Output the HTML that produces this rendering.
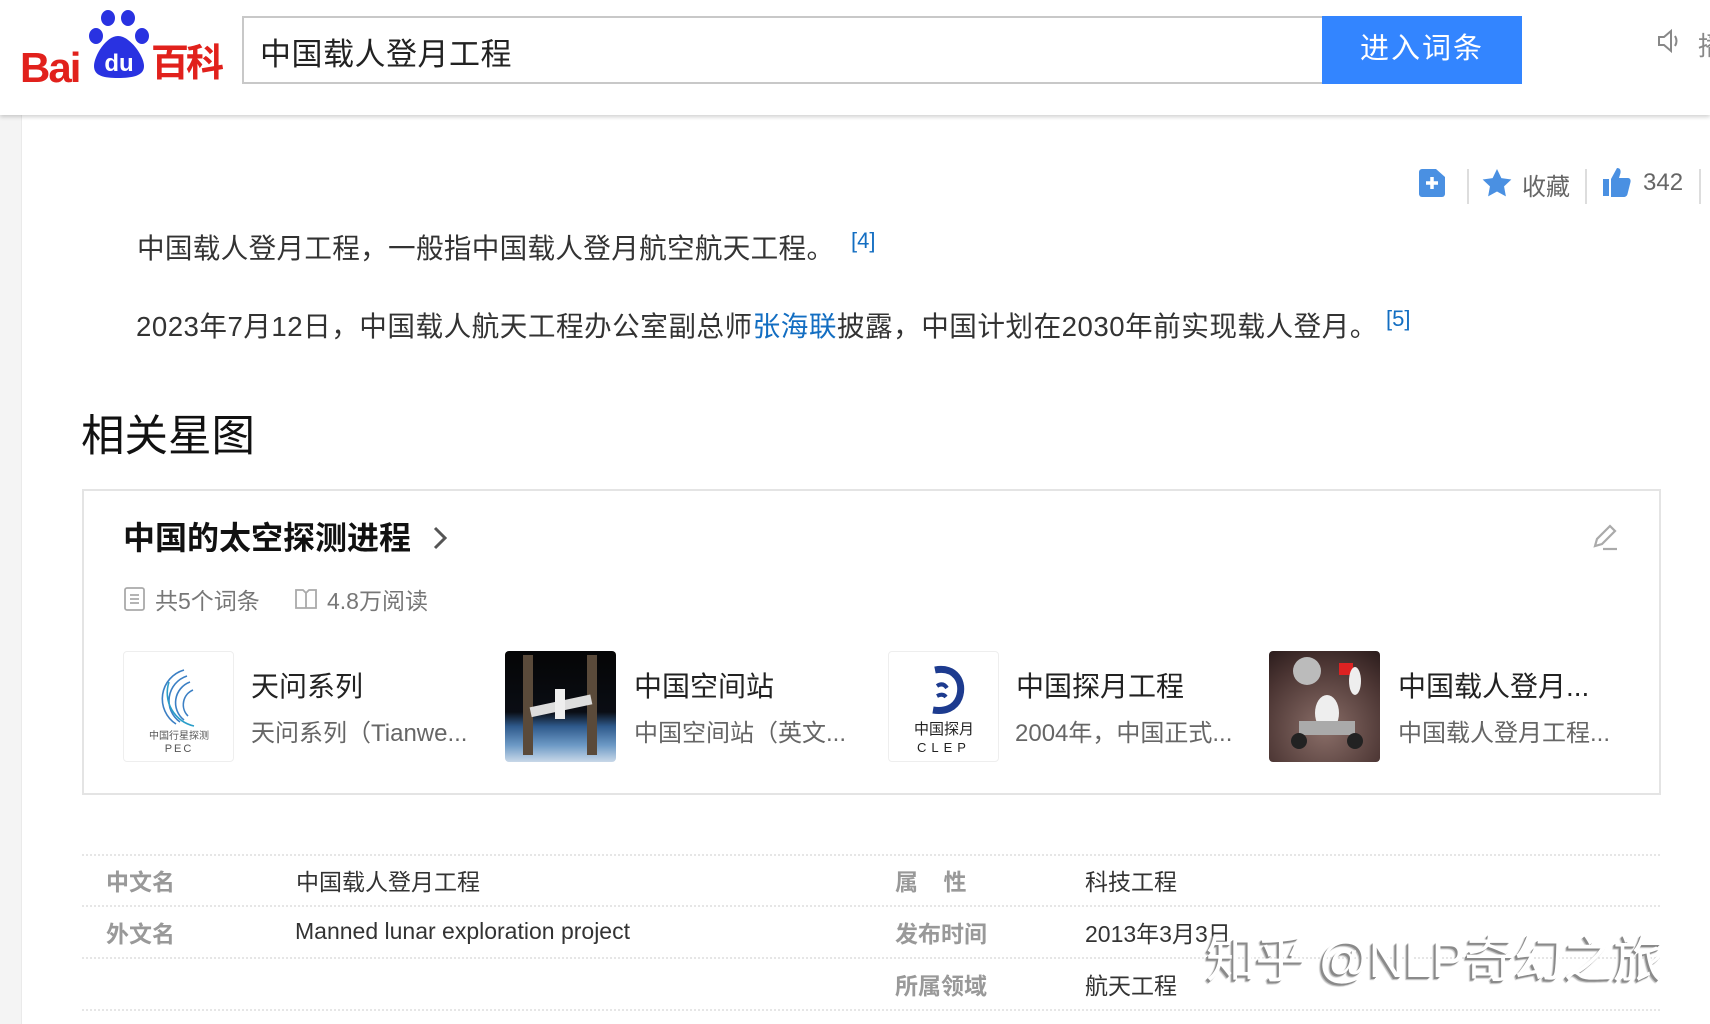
<!DOCTYPE html>
<html><head><meta charset="utf-8"><style>
*{margin:0;padding:0;box-sizing:border-box}
body{width:1710px;height:1024px;overflow:hidden;background:#fff;font-family:"Liberation Sans","Noto Sans CJK SC",sans-serif;color:#222;position:relative}
.a{position:absolute;white-space:nowrap}
.hdr{position:absolute;left:0;top:0;width:1710px;height:115px;background:#fff;box-shadow:0 2px 4px rgba(0,0,0,.18);z-index:2}
.strip{position:absolute;left:0;top:115px;width:22px;height:909px;background:#f4f4f4;border-right:1px solid #eaeaea}
.p{font-size:27.6px;line-height:32px;color:#333}
.sup{font-size:22px;color:#136ec2}
.tt{font-size:28px;color:#222}
.st{font-size:24px;color:#666}
.thumb{position:absolute;width:111px;height:111px;border-radius:4px;overflow:hidden}
.lab{font-size:23px;color:#999;font-weight:bold}
.val{font-size:23px;color:#333}
.dl{position:absolute;left:82px;width:1578px;height:0;border-top:2px dotted #e6e6e6}
</style></head><body>
<div class="hdr">
 <div class="a" style="left:20px;top:44px;font-size:42px;font-weight:bold;color:#e1211c;letter-spacing:-2px;font-family:'Liberation Sans',sans-serif">Bai</div>
 <svg class="a" style="left:88px;top:8px" width="66" height="72" viewBox="0 0 66 72">
  <ellipse cx="20" cy="10" rx="7" ry="8" fill="#2932e1"/><ellipse cx="40" cy="10" rx="7" ry="8" fill="#2932e1"/>
  <ellipse cx="8" cy="28" rx="7" ry="8" fill="#2932e1"/><ellipse cx="54" cy="28" rx="7" ry="8" fill="#2932e1"/>
  <path d="M30 28 C18 28 6 48 6 58 C6 68 16 70 30 70 C44 70 56 68 56 58 C56 48 42 28 30 28Z" fill="#2932e1"/>
  <text x="31" y="63" font-size="24" font-weight="bold" fill="#fff" text-anchor="middle" font-family="Liberation Sans">du</text>
 </svg>
 <div class="a" style="left:151px;top:32px;font-size:38px;font-weight:bold;color:#e1211c;letter-spacing:-3px">百科</div>
 <div class="a" style="left:242px;top:16px;width:1082px;height:68px;border:2px solid #c8c8c8;border-right:none"></div>
 <div class="a" style="left:260px;top:29px;font-size:31px;color:#222;letter-spacing:.5px">中国载人登月工程</div>
 <div class="a" style="left:1322px;top:16px;width:200px;height:68px;background:#3385ff;color:#fff;font-size:29px;text-align:center;line-height:66px;letter-spacing:2px">进入词条</div>
 <svg class="a" style="left:1656px;top:28px" width="28" height="26" viewBox="0 0 28 26"><path d="M3 9h5l7-6v20l-7-6H3z" fill="none" stroke="#888" stroke-width="2"/><path d="M19 8q3 5 0 10" fill="none" stroke="#888" stroke-width="2"/></svg>
 <div class="a" style="left:1698px;top:26px;font-size:26px;color:#888">播</div>
</div>
<div class="strip"></div>

<svg class="a" style="left:1419px;top:169px" width="26" height="28" viewBox="0 0 26 28"><path d="M3 0h14l9 8v17a3 3 0 0 1-3 3H3a3 3 0 0 1-3-3V3a3 3 0 0 1 3-3z" fill="#4a90e2"/><path d="M13 8v12M7 14h12" stroke="#fff" stroke-width="3.5"/></svg>
<div class="a" style="left:1467px;top:169px;width:2px;height:35px;background:#ddd"></div>
<svg class="a" style="left:1482px;top:169px" width="30" height="28" viewBox="0 0 24 23"><path d="M12 0l3.6 7.5 8.2 1.1-6 5.7 1.5 8.2L12 18.5 4.7 22.5l1.5-8.2-6-5.7 8.2-1.1z" fill="#4a90e2"/></svg>
<div class="a" style="left:1522px;top:167px;font-size:24px;color:#666">收藏</div>
<div class="a" style="left:1585px;top:169px;width:2px;height:35px;background:#ddd"></div>
<svg class="a" style="left:1603px;top:167px" width="28" height="30" viewBox="0 0 28 30"><rect x="0" y="12" width="6" height="17" fill="#4a90e2"/><path d="M8 12 L14 1 c3 0 4 2 3.5 5 L16 11 h9 c2 0 3 2 2.5 4 l-3 12 c-.5 2-2 3-4 3H8z" fill="#4a90e2"/></svg>
<div class="a" style="left:1643px;top:169px;font-size:24px;color:#666">342</div>
<div class="a" style="left:1699px;top:169px;width:2px;height:35px;background:#ddd"></div>

<div class="a p" style="left:137px;top:233px;letter-spacing:.3px">中国载人登月工程，一般指中国载人登月航空航天工程。</div>
<div class="a sup" style="left:851px;top:228px">[4]</div>
<div class="a p" style="left:136px;top:311px;letter-spacing:.5px">2023年7月12日，中国载人航天工程办公室副总师<span style="color:#136ec2">张海联</span>披露，中国计划在2030年前实现载人登月。</div>
<div class="a sup" style="left:1386px;top:306px">[5]</div>

<div class="a" style="left:81px;top:411px;font-size:43.5px;color:#111;line-height:52px">相关星图</div>

<div class="a" style="left:82px;top:489px;width:1579px;height:306px;border:2px solid #e4e4e4"></div>
<div class="a" style="left:123px;top:518px;font-size:32px;font-weight:bold;color:#111;line-height:40px">中国的太空探测进程</div>
<svg class="a" style="left:432px;top:525px" width="16" height="26" viewBox="0 0 16 26"><path d="M3 3l10 10L3 23" fill="none" stroke="#555" stroke-width="3"/></svg>
<svg class="a" style="left:1590px;top:522px" width="30" height="30" viewBox="0 0 30 30"><path d="M5 24l2-7L20 4l5 5-13 13z" fill="none" stroke="#aaa" stroke-width="2.2"/><path d="M13 27h14" stroke="#aaa" stroke-width="2.2"/></svg>

<svg class="a" style="left:124px;top:587px" width="22" height="24" viewBox="0 0 22 24"><rect x="1" y="1" width="19" height="22" rx="2" fill="none" stroke="#aaa" stroke-width="1.8"/><path d="M6 8h9M6 12h9M6 16h9" stroke="#aaa" stroke-width="1.8"/></svg>
<div class="a" style="left:155px;top:582px;font-size:23px;color:#777">共5个词条</div>
<svg class="a" style="left:294px;top:588px" width="24" height="22" viewBox="0 0 24 22"><path d="M2 2h7l3 3 3-3h7v18H2z M12 5v15" fill="none" stroke="#aaa" stroke-width="1.8"/></svg>
<div class="a" style="left:327px;top:582px;font-size:23px;color:#777">4.8万阅读</div>

<div class="thumb" style="left:123px;top:651px;border:1px solid #eee;background:#fff">
 <svg width="111" height="111" viewBox="0 0 111 111"><g fill="none" stroke="#3b7fc4" stroke-width="1.6"><path d="M60 18 A30 30 0 0 0 52 72"/><path d="M63 24 A26 26 0 0 0 56 70"/><path d="M66 30 A22 22 0 0 0 60 68"/><path d="M69 38 A16 16 0 0 0 64 64"/><path d="M45 30 A34 34 0 0 0 70 74" stroke="#2a9ec9"/></g>
 <text x="55" y="87" font-size="10" fill="#555" text-anchor="middle" font-family="Noto Sans CJK SC">中国行星探测</text>
 <text x="55" y="100" font-size="11" fill="#555" text-anchor="middle" letter-spacing="2" font-family="Liberation Sans">PEC</text></svg>
</div>
<div class="a tt" style="left:251px;top:665px">天问系列</div>
<div class="a st" style="left:251px;top:713px">天问系列（Tianwe...</div>

<div class="thumb" style="left:505px;top:651px;background:linear-gradient(#050505 0%,#0a0d14 55%,#2f5a8c 68%,#6d9ac6 85%,#c8d8e8 100%)">
 <svg width="111" height="111" viewBox="0 0 111 111"><rect x="18" y="4" width="10" height="100" fill="#5a4a3a"/><rect x="82" y="4" width="10" height="100" fill="#5a4a3a"/><rect x="25" y="50" width="62" height="10" fill="#ddd" transform="rotate(-12 55 55)"/><rect x="50" y="38" width="10" height="30" fill="#eee"/></svg>
</div>
<div class="a tt" style="left:634px;top:665px">中国空间站</div>
<div class="a st" style="left:634px;top:713px">中国空间站（英文...</div>

<div class="thumb" style="left:888px;top:651px;border:1px solid #eee;background:#fff">
 <svg width="111" height="111" viewBox="0 0 111 111"><path d="M46 18 C66 14 76 30 70 46 C66 56 56 60 44 58" fill="none" stroke="#1d3b8f" stroke-width="7"/><path d="M48 34 q6 -4 10 2 M48 44 q6 -3 9 1" fill="none" stroke="#1d3b8f" stroke-width="4"/>
 <text x="55" y="82" font-size="15" fill="#222" text-anchor="middle" font-family="Noto Sans CJK SC">中国探月</text>
 <text x="55" y="100" font-size="13" fill="#222" text-anchor="middle" letter-spacing="5" font-family="Liberation Sans">CLEP</text></svg>
</div>
<div class="a tt" style="left:1016px;top:665px">中国探月工程</div>
<div class="a st" style="left:1015px;top:713px">2004年，中国正式...</div>

<div class="thumb" style="left:1269px;top:651px;background:radial-gradient(circle at 50% 70%,#8a6e68,#4a3432 70%,#2b1c1c)">
 <svg width="111" height="111" viewBox="0 0 111 111"><circle cx="38" cy="20" r="14" fill="#bbb"/><rect x="70" y="12" width="14" height="12" fill="#d22"/><ellipse cx="86" cy="30" rx="6" ry="14" fill="#eee"/><ellipse cx="58" cy="62" rx="12" ry="18" fill="#eee"/><rect x="30" y="70" width="56" height="14" fill="#aaa"/><circle cx="30" cy="90" r="8" fill="#222"/><circle cx="86" cy="90" r="8" fill="#222"/></svg>
</div>
<div class="a tt" style="left:1398px;top:665px">中国载人登月...</div>
<div class="a st" style="left:1398px;top:713px">中国载人登月工程...</div>

<div class="dl" style="top:854px"></div>
<div class="dl" style="top:905px"></div>
<div class="dl" style="top:957px"></div>
<div class="dl" style="top:1009px"></div>
<div class="a lab" style="left:106px;top:863px">中文名</div>
<div class="a val" style="left:296px;top:863px">中国载人登月工程</div>
<div class="a lab" style="left:895px;top:863px">属&nbsp;&nbsp;&nbsp;&nbsp;性</div>
<div class="a val" style="left:1085px;top:863px">科技工程</div>
<div class="a lab" style="left:106px;top:915px">外文名</div>
<div class="a val" style="left:295px;top:918px">Manned lunar exploration project</div>
<div class="a lab" style="left:895px;top:915px">发布时间</div>
<div class="a val" style="left:1085px;top:915px">2013年3月3日</div>
<div class="a lab" style="left:895px;top:967px">所属领域</div>
<div class="a val" style="left:1085px;top:967px">航天工程</div>

<div class="a" style="left:1206px;top:920px;font-size:50px;color:#fff;text-shadow:-2px 2px 0 #8a8a8a,-1px 1px 0 #999,-3px 3px 1px #bbb;letter-spacing:-.5px">知乎 @NLP奇幻之旅</div>
</body></html>
